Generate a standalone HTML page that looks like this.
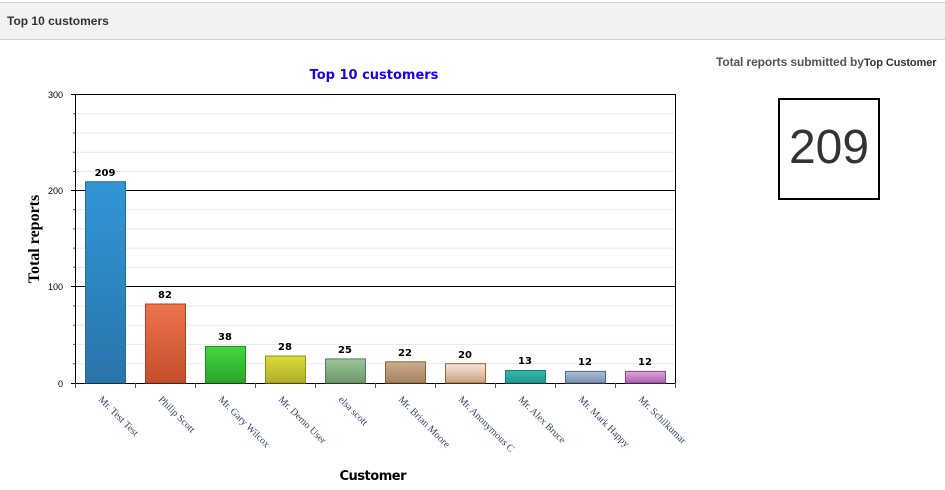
<!DOCTYPE html>
<html><head><meta charset="utf-8"><style>
body{margin:0;width:945px;height:490px;background:#fff;overflow:hidden;font-family:"Liberation Sans",sans-serif}
.hdr{position:absolute;left:0;top:2px;width:945px;height:36px;background:#f2f2f2;border-top:1px solid #d6d6d6;border-bottom:1px solid #d0d0d0}
.hdr span{position:absolute;left:7px;top:11px;font-size:12px;font-weight:bold;color:#333}
.rt{position:absolute;left:716px;top:55px;font-size:12px;font-weight:bold;color:#555;white-space:nowrap;letter-spacing:-0.1px}
.rt b{color:#333;font-size:11px}
.box{position:absolute;left:778px;top:98px;width:98px;height:98px;border:2px solid #000;text-align:center;line-height:96px;font-size:48px;color:#333}
</style></head><body>
<div class="hdr"><span>Top 10 customers</span></div>
<div class="rt">Total reports submitted by<b>Top Customer</b></div>
<div class="box">209</div>
<svg width="945" height="490" style="position:absolute;left:0;top:0">
<defs>
<linearGradient id="g0" x1="0" y1="0" x2="0" y2="1"><stop offset="0" stop-color="#3196d6"/><stop offset="1" stop-color="#2a74aa"/></linearGradient>
<linearGradient id="g1" x1="0" y1="0" x2="0" y2="1"><stop offset="0" stop-color="#ec744e"/><stop offset="1" stop-color="#c44e2c"/></linearGradient>
<linearGradient id="g2" x1="0" y1="0" x2="0" y2="1"><stop offset="0" stop-color="#40d840"/><stop offset="1" stop-color="#2aa42a"/></linearGradient>
<linearGradient id="g3" x1="0" y1="0" x2="0" y2="1"><stop offset="0" stop-color="#dcdc3a"/><stop offset="1" stop-color="#aeae2a"/></linearGradient>
<linearGradient id="g4" x1="0" y1="0" x2="0" y2="1"><stop offset="0" stop-color="#9cc49c"/><stop offset="1" stop-color="#6c966c"/></linearGradient>
<linearGradient id="g5" x1="0" y1="0" x2="0" y2="1"><stop offset="0" stop-color="#ccae8e"/><stop offset="1" stop-color="#a2825e"/></linearGradient>
<linearGradient id="g6" x1="0" y1="0" x2="0" y2="1"><stop offset="0" stop-color="#f4e6da"/><stop offset="1" stop-color="#c8a07e"/></linearGradient>
<linearGradient id="g7" x1="0" y1="0" x2="0" y2="1"><stop offset="0" stop-color="#34b4ac"/><stop offset="1" stop-color="#249890"/></linearGradient>
<linearGradient id="g8" x1="0" y1="0" x2="0" y2="1"><stop offset="0" stop-color="#aebed6"/><stop offset="1" stop-color="#7890b0"/></linearGradient>
<linearGradient id="g9" x1="0" y1="0" x2="0" y2="1"><stop offset="0" stop-color="#dca6dc"/><stop offset="1" stop-color="#b060b0"/></linearGradient>
</defs>
<text x="374" y="79" text-anchor="middle" font-size="13" font-weight="bold" fill="#2200ee" font-family="DejaVu Sans,sans-serif">Top 10 customers</text>
<g stroke="#e8e8e8" stroke-width="1">
<line x1="75" x2="675" y1="113.8" y2="113.8"/><line x1="75" x2="675" y1="133" y2="133"/><line x1="75" x2="675" y1="152.3" y2="152.3"/><line x1="75" x2="675" y1="171.5" y2="171.5"/>
<line x1="75" x2="675" y1="209.6" y2="209.6"/><line x1="75" x2="675" y1="228.9" y2="228.9"/><line x1="75" x2="675" y1="248.1" y2="248.1"/><line x1="75" x2="675" y1="267.4" y2="267.4"/>
<line x1="75" x2="675" y1="305.9" y2="305.9"/><line x1="75" x2="675" y1="325.2" y2="325.2"/><line x1="75" x2="675" y1="344.4" y2="344.4"/><line x1="75" x2="675" y1="363.7" y2="363.7"/>
</g>
<g stroke="#000" stroke-width="1">
<line x1="71" x2="675" y1="94.5" y2="94.5"/><line x1="71" x2="675" y1="190.5" y2="190.5"/><line x1="71" x2="675" y1="286.5" y2="286.5"/><line x1="71" x2="675" y1="383.5" y2="383.5"/>
<line x1="75.5" x2="75.5" y1="94" y2="383"/><line x1="675.5" x2="675.5" y1="94" y2="383"/>
</g>
<g stroke="#555"><path d="M73 113.8h2M73 133h2M73 152.3h2M73 171.5h2M73 209.6h2M73 228.9h2M73 248.1h2M73 267.4h2M73 305.9h2M73 325.2h2M73 344.4h2M73 363.7h2"/>
<path d="M75.5 383v5M135.5 383v5M195.5 383v5M255.5 383v5M315.5 383v5M375.5 383v5M435.5 383v5M495.5 383v5M555.5 383v5M615.5 383v5M675.5 383v5"/></g>
<g font-size="9" text-anchor="end" fill="#000"><text x="63" y="98">300</text><text x="63" y="194">200</text><text x="63" y="290">100</text><text x="63" y="387">0</text></g>
<g stroke-width="1">
<rect x="85.5" y="181.7" width="40" height="201.3" fill="url(#g0)" stroke="#2a6a9a"/>
<rect x="145.5" y="304" width="40" height="79" fill="url(#g1)" stroke="#a84024"/>
<rect x="205.5" y="346.4" width="40" height="36.6" fill="url(#g2)" stroke="#228a22"/>
<rect x="265.5" y="356" width="40" height="27" fill="url(#g3)" stroke="#909020"/>
<rect x="325.5" y="358.9" width="40" height="24.1" fill="url(#g4)" stroke="#5a805a"/>
<rect x="385.5" y="361.8" width="40" height="21.2" fill="url(#g5)" stroke="#80603e"/>
<rect x="445.5" y="363.7" width="40" height="19.3" fill="url(#g6)" stroke="#a06030"/>
<rect x="505.5" y="370.5" width="40" height="12.5" fill="url(#g7)" stroke="#1a8078"/>
<rect x="565.5" y="371.4" width="40" height="11.6" fill="url(#g8)" stroke="#506888"/>
<rect x="625.5" y="371.4" width="40" height="11.6" fill="url(#g9)" stroke="#904090"/>
</g>
<g font-size="10" font-weight="bold" text-anchor="middle" fill="#000" font-family="DejaVu Sans,sans-serif">
<text x="105" y="176">209</text><text x="165" y="298">82</text><text x="225" y="340">38</text><text x="285" y="350">28</text><text x="345" y="353">25</text><text x="405" y="356">22</text><text x="465" y="358">20</text><text x="525" y="364">13</text><text x="585" y="365">12</text><text x="645" y="365">12</text>
</g>
<g font-size="10" fill="#334466" font-family="Liberation Serif,serif">
<text transform="translate(98,400) rotate(45)">Mr. Test Test</text>
<text transform="translate(158,400) rotate(45)">Philip Scott</text>
<text transform="translate(218,400) rotate(45)">Mr. Gary Wilcox</text>
<text transform="translate(278,400) rotate(45)">Mr. Demo User</text>
<text transform="translate(338,400) rotate(45)">elsa scott</text>
<text transform="translate(398,400) rotate(45)">Mr. Brian Moore</text>
<text transform="translate(458,400) rotate(45)">Mr. Anonymous C</text>
<text transform="translate(518,400) rotate(45)">Mr. Alex Bruce</text>
<text transform="translate(578,400) rotate(45)">Mr. Mark Happy</text>
<text transform="translate(638,400) rotate(45)">Mr. Schilkumar</text>
</g>
<text x="373" y="480" text-anchor="middle" font-size="13" font-weight="bold" fill="#000" font-family="DejaVu Sans,sans-serif" textLength="67">Customer</text>
<text transform="translate(39,239) rotate(-90)" text-anchor="middle" font-size="16" font-weight="bold" fill="#000" font-family="Liberation Serif,serif">Total reports</text>
</svg>
</body></html>
